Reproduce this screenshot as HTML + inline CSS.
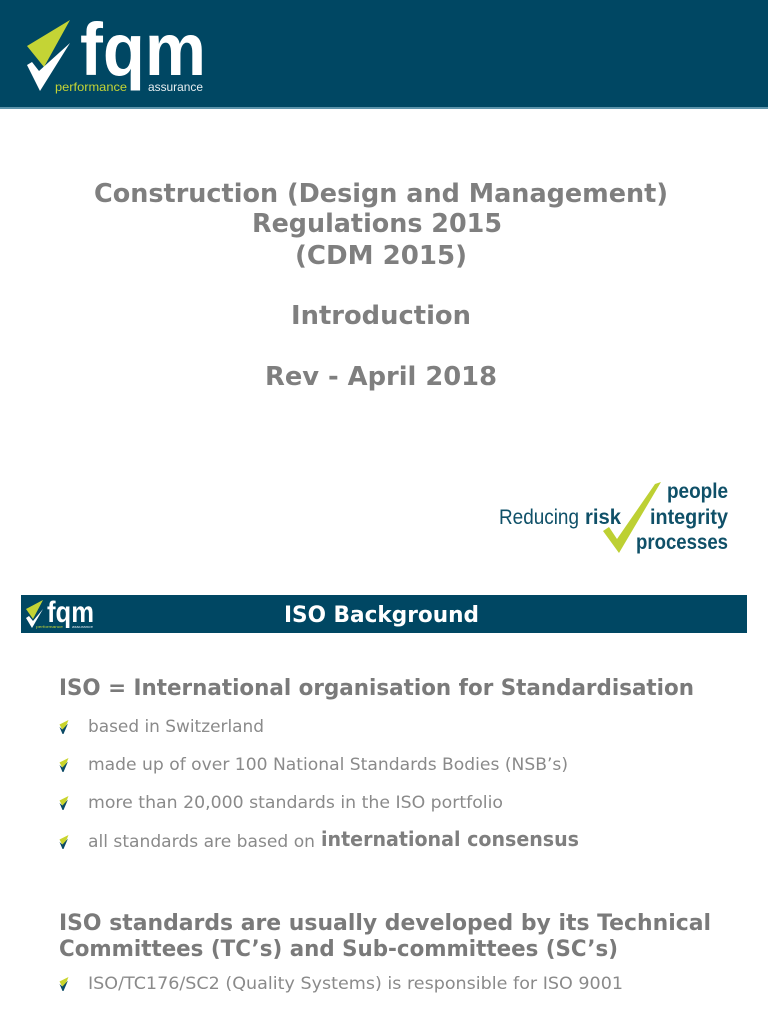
<!DOCTYPE html>
<html><head><meta charset="utf-8"><style>
html,body{margin:0;padding:0;background:#fff;width:768px;height:1024px;overflow:hidden}
svg{display:block}
text{font-family:"DejaVu Sans",sans-serif}
.t{font-weight:700;font-size:25.5px;fill:#7f7f7f}
.h{font-weight:700;font-size:22px;fill:#7a7a7a}
.b{font-size:17px;fill:#8a8a8a}
.l{font-family:"Liberation Sans",sans-serif}
</style></head><body>
<svg width="768" height="1024" viewBox="0 0 768 1024" xmlns="http://www.w3.org/2000/svg">
<defs>
<g id="tick"><path d="M0.5 4.5L9.5 0L6 8.5L3.5 10Z" fill="#c9d42c"/><path d="M0.5 7L3.5 9.5L9 3.5L4.5 14L3.5 14Z" fill="#0b4a66"/></g>
</defs>
<rect width="768" height="108" fill="#004763"/>
<rect y="107" width="768" height="2" fill="#5d94ab"/>
<path d="M27 46L70 20L44 67Z" fill="#c4d435"/>
<path d="M27 65L32 62L39 71L70 43L40 91Z" fill="#fff"/>
<text class="l" x="80" y="75" font-size="74" font-weight="700" fill="#fff" textLength="126" lengthAdjust="spacingAndGlyphs">fqm</text>
<text class="l" x="55" y="91" font-size="12" fill="#c4d435" textLength="72" lengthAdjust="spacingAndGlyphs">performance</text>
<text class="l" x="148" y="91" font-size="12" fill="#e6eef1" textLength="55" lengthAdjust="spacingAndGlyphs">assurance</text>

<text class="t" x="94" y="202" textLength="574" lengthAdjust="spacingAndGlyphs">Construction (Design and Management)</text>
<text class="t" x="252" y="232" textLength="250" lengthAdjust="spacingAndGlyphs">Regulations 2015</text>
<text class="t" x="295" y="264" textLength="172" lengthAdjust="spacingAndGlyphs">(CDM 2015)</text>
<text class="t" x="291" y="324" textLength="180" lengthAdjust="spacingAndGlyphs">Introduction</text>
<text class="t" x="265" y="385" textLength="232" lengthAdjust="spacingAndGlyphs">Rev - April 2018</text>

<path d="M603 531L609 527L617 539L655 484L661 482L619 553Z" fill="#bdd033"/>
<text class="l" x="499" y="524" font-size="21" fill="#0f5068" textLength="80" lengthAdjust="spacingAndGlyphs">Reducing</text>
<text class="l" x="585" y="524" font-size="21" font-weight="700" fill="#0f5068" textLength="36" lengthAdjust="spacingAndGlyphs">risk</text>
<text class="l" x="667" y="498" font-size="21" font-weight="700" fill="#0f5068" textLength="61" lengthAdjust="spacingAndGlyphs">people</text>
<text class="l" x="650" y="524" font-size="21" font-weight="700" fill="#0f5068" textLength="78" lengthAdjust="spacingAndGlyphs">integrity</text>
<text class="l" x="636" y="549" font-size="21" font-weight="700" fill="#0f5068" textLength="92" lengthAdjust="spacingAndGlyphs">processes</text>

<rect x="21" y="595" width="726" height="38" fill="#004763"/>
<path d="M26 609L43 600L33 619Z" fill="#c4d435"/>
<path d="M26 618L29 616L33 621L43 609L32 628Z" fill="#fff"/>
<text class="l" x="47" y="622" font-size="30" font-weight="700" fill="#fff" textLength="47" lengthAdjust="spacingAndGlyphs">fqm</text>
<text class="l" x="36" y="628" font-size="4" fill="#c4d435" textLength="27" lengthAdjust="spacingAndGlyphs">performance</text>
<text class="l" x="72" y="628" font-size="4" fill="#dfe8ec" textLength="21" lengthAdjust="spacingAndGlyphs">assurance</text>
<text x="284" y="622" font-size="22" font-weight="700" fill="#fff" textLength="195" lengthAdjust="spacingAndGlyphs">ISO Background</text>

<text class="h" x="59" y="695" textLength="635" lengthAdjust="spacingAndGlyphs">ISO = International organisation for Standardisation</text>

<use href="#tick" x="59" y="720"/>
<text class="b" x="88" y="732" textLength="176" lengthAdjust="spacingAndGlyphs">based in Switzerland</text>
<use href="#tick" x="59" y="758"/>
<text class="b" x="88" y="770" textLength="480" lengthAdjust="spacingAndGlyphs">made up of over 100 National Standards Bodies (NSB’s)</text>
<use href="#tick" x="59" y="796"/>
<text class="b" x="88" y="808" textLength="415" lengthAdjust="spacingAndGlyphs">more than 20,000 standards in the ISO portfolio</text>
<use href="#tick" x="59" y="835"/>
<text class="b" x="88" y="847" textLength="227" lengthAdjust="spacingAndGlyphs">all standards are based on</text>
<text x="321" y="846" font-size="20" font-weight="700" fill="#7f7f7f" textLength="258" lengthAdjust="spacingAndGlyphs">international consensus</text>

<text class="h" x="59" y="930" textLength="652" lengthAdjust="spacingAndGlyphs">ISO standards are usually developed by its Technical</text>
<text class="h" x="59" y="956" textLength="559" lengthAdjust="spacingAndGlyphs">Committees (TC’s) and Sub-committees (SC’s)</text>
<use href="#tick" x="59" y="977"/>
<text class="b" x="88" y="989" textLength="535" lengthAdjust="spacingAndGlyphs">ISO/TC176/SC2 (Quality Systems) is responsible for ISO 9001</text>
</svg>
</body></html>
